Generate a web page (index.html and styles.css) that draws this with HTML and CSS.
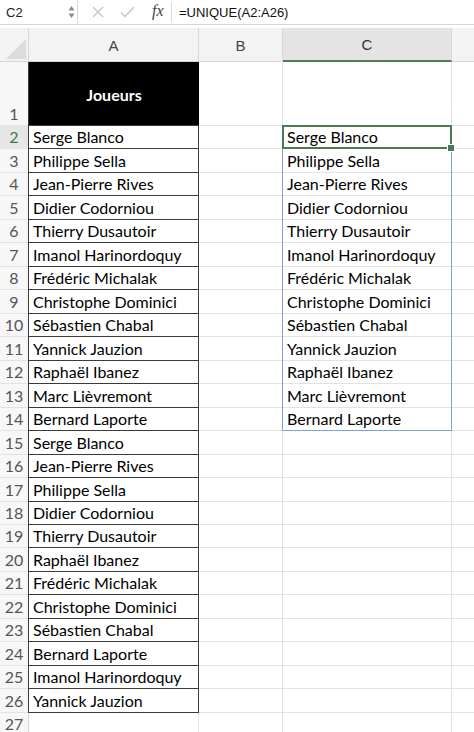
FILE: index.html
```html
<!DOCTYPE html>
<html lang="fr">
<head>
<meta charset="utf-8">
<title>UNIQUE</title>
<link rel="stylesheet" href="styles.css">
</head>
<body>
<div class="fbar">
  <div class="namebox">
    <span class="ref">C2</span>
    <span class="stepper">
      <svg width="7" height="14" viewBox="0 0 7 14"><path d="M3.5 1 L6.5 5.5 H0.5 Z M3.5 13 L6.5 8.5 H0.5 Z" fill="#8a8a8a"/></svg>
    </span>
  </div>
  <div class="tools">
    <svg class="ico" width="12" height="12" viewBox="0 0 12 12"><path d="M1 1 L11 11 M11 1 L1 11" stroke="#c4c4c4" stroke-width="1.3" fill="none"/></svg>
    <svg class="ico" width="15" height="12" viewBox="0 0 15 12"><path d="M1 6.5 L5 10.5 L14 1" stroke="#c4c4c4" stroke-width="1.3" fill="none"/></svg>
    <span class="fx">fx</span>
  </div>
  <div class="input">=UNIQUE(A2:A26)</div>
</div>

<div class="sheet">
  <div class="corner"><span class="tri"></span></div>
  <div class="ch">A</div>
  <div class="ch">B</div>
  <div class="ch act">C</div>
  <div class="ch last"></div>

  <div class="rh">1</div>
  <div class="head">Joueurs</div>
  <div class="c"></div><div class="c"></div><div class="c last"></div>

  <div class="rh act">2</div><div class="c t">Serge Blanco</div><div class="c"></div><div class="c v">Serge Blanco</div><div class="c last"></div>
  <div class="rh">3</div><div class="c t">Philippe Sella</div><div class="c"></div><div class="c v">Philippe Sella</div><div class="c last"></div>
  <div class="rh">4</div><div class="c t">Jean-Pierre Rives</div><div class="c"></div><div class="c v">Jean-Pierre Rives</div><div class="c last"></div>
  <div class="rh">5</div><div class="c t">Didier Codorniou</div><div class="c"></div><div class="c v">Didier Codorniou</div><div class="c last"></div>
  <div class="rh">6</div><div class="c t">Thierry Dusautoir</div><div class="c"></div><div class="c v">Thierry Dusautoir</div><div class="c last"></div>
  <div class="rh">7</div><div class="c t">Imanol Harinordoquy</div><div class="c"></div><div class="c v">Imanol Harinordoquy</div><div class="c last"></div>
  <div class="rh">8</div><div class="c t">Frédéric Michalak</div><div class="c"></div><div class="c v">Frédéric Michalak</div><div class="c last"></div>
  <div class="rh">9</div><div class="c t">Christophe Dominici</div><div class="c"></div><div class="c v">Christophe Dominici</div><div class="c last"></div>
  <div class="rh">10</div><div class="c t">Sébastien Chabal</div><div class="c"></div><div class="c v">Sébastien Chabal</div><div class="c last"></div>
  <div class="rh">11</div><div class="c t">Yannick Jauzion</div><div class="c"></div><div class="c v">Yannick Jauzion</div><div class="c last"></div>
  <div class="rh">12</div><div class="c t">Raphaël Ibanez</div><div class="c"></div><div class="c v">Raphaël Ibanez</div><div class="c last"></div>
  <div class="rh">13</div><div class="c t">Marc Lièvremont</div><div class="c"></div><div class="c v">Marc Lièvremont</div><div class="c last"></div>
  <div class="rh">14</div><div class="c t">Bernard Laporte</div><div class="c"></div><div class="c v">Bernard Laporte</div><div class="c last"></div>
  <div class="rh">15</div><div class="c t">Serge Blanco</div><div class="c"></div><div class="c"></div><div class="c last"></div>
  <div class="rh">16</div><div class="c t">Jean-Pierre Rives</div><div class="c"></div><div class="c"></div><div class="c last"></div>
  <div class="rh">17</div><div class="c t">Philippe Sella</div><div class="c"></div><div class="c"></div><div class="c last"></div>
  <div class="rh">18</div><div class="c t">Didier Codorniou</div><div class="c"></div><div class="c"></div><div class="c last"></div>
  <div class="rh">19</div><div class="c t">Thierry Dusautoir</div><div class="c"></div><div class="c"></div><div class="c last"></div>
  <div class="rh">20</div><div class="c t">Raphaël Ibanez</div><div class="c"></div><div class="c"></div><div class="c last"></div>
  <div class="rh">21</div><div class="c t">Frédéric Michalak</div><div class="c"></div><div class="c"></div><div class="c last"></div>
  <div class="rh">22</div><div class="c t">Christophe Dominici</div><div class="c"></div><div class="c"></div><div class="c last"></div>
  <div class="rh">23</div><div class="c t">Sébastien Chabal</div><div class="c"></div><div class="c"></div><div class="c last"></div>
  <div class="rh">24</div><div class="c t">Bernard Laporte</div><div class="c"></div><div class="c"></div><div class="c last"></div>
  <div class="rh">25</div><div class="c t">Imanol Harinordoquy</div><div class="c"></div><div class="c"></div><div class="c last"></div>
  <div class="rh">26</div><div class="c t">Yannick Jauzion</div><div class="c"></div><div class="c"></div><div class="c last"></div>
  <div class="rh">27</div><div class="c"></div><div class="c"></div><div class="c"></div><div class="c last"></div>

  <div class="spill"></div>
  <div class="active"><span class="handle"></span></div>
</div>
</body>
</html>
```

FILE: styles.css
```css
* { box-sizing: border-box; }
html, body { margin: 0; padding: 0; background: #fff; }
body {
  width: 474px;
  height: 732px;
  overflow: hidden;
  font-family: "Liberation Sans", Arial, sans-serif;
}

.fbar {
  display: flex;
  height: 25px;
  border-bottom: 1px solid #d6d6d6;
  background: #fff;
}
.namebox {
  width: 78px;
  display: flex;
  align-items: center;
  justify-content: space-between;
  padding: 0 2px 0 6px;
  border-right: 1px solid #d9d9d9;
}
.ref { font-size: 13px; color: #222; }
.stepper { display: flex; align-items: center; }
.tools {
  width: 93px;
  display: flex;
  align-items: center;
  padding-left: 14px;
}
.tools .ico { margin-right: 16px; }
.tools .ico + .ico { margin-right: 17px; }
.fx {
  font-family: "Liberation Serif", "Times New Roman", serif;
  font-style: italic;
  font-size: 16px;
  color: #444;
  margin-top: -2px;
}
.input {
  flex: 1;
  display: flex;
  align-items: center;
  padding-left: 7px;
  font-size: 13px;
  color: #111;
  border-left: 1px solid #d9d9d9;
  margin: 2px 0 2px 0;
}

.sheet {
  position: relative;
  margin-top: 3px;
  display: grid;
  grid-template-columns: 29px 170px 84px 169px 1fr;
  grid-template-rows: 34px 64px repeat(26, 23.47px);
  font-family: Lato, "Open Sans", sans-serif;
}

.corner {
  position: relative;
  background: #f3f3f3;
  border-right: 1px solid #d6d6d6;
  border-bottom: 1px solid #d6d6d6;
}
.tri {
  position: absolute;
  right: 2px;
  bottom: 2px;
  width: 0;
  height: 0;
  border-left: 20px solid transparent;
  border-bottom: 20px solid #dcdcdc;
}
.ch {
  background: #f3f3f3;
  border-right: 1px solid #d6d6d6;
  border-bottom: 1px solid #d6d6d6;
  display: flex;
  align-items: center;
  justify-content: center;
  font-family: "Liberation Sans", Arial, sans-serif;
  font-size: 15px;
  color: #444;
  padding-top: 1px;
}
.ch.act {
  background: #e4e4e4;
  border-bottom: 2px solid #4e7f57;
  color: #333;
}
.ch.last { border-right: none; }

.rh {
  background: #f7f7f7;
  border-right: 1px solid #d6d6d6;
  border-bottom: 1px solid #e2e2e2;
  display: flex;
  align-items: flex-end;
  justify-content: center;
  font-size: 16px;
  color: #555;
  padding-bottom: 1px;
  line-height: 20px;
}
.rh.act { background: #e6e6e6; color: #3f7a4a; }

.c {
  border-right: 1px solid #e2e2e2;
  border-bottom: 1px solid #e2e2e2;
  font-size: 16px;
  color: #000;
  white-space: nowrap;
  overflow: hidden;
  display: flex;
  align-items: flex-end;
  padding: 0 0 1px 4px;
  line-height: 20px;
}
.c.last { border-right: none; }
.c.t {
  border-right: 1px solid #3a3a3a;
  border-bottom: 1px solid #3a3a3a;
  box-shadow: -1px 0 0 #3a3a3a;
}
.head {
  background: #000;
  color: #fff;
  font-weight: bold;
  font-size: 16px;
  display: flex;
  align-items: center;
  justify-content: center;
  padding-top: 2px;
  border-bottom: 1px solid #3a3a3a;
  box-shadow: -1px 0 0 #3a3a3a;
}

.spill {
  position: absolute;
  grid-column: 4 / 5;
  grid-row: 3 / 16;
  top: -1px;
  left: -1px;
  right: 0;
  bottom: 0;
  border: 1px solid #7f9fd6;
  pointer-events: none;
}
.active {
  position: absolute;
  grid-column: 4 / 5;
  grid-row: 3 / 4;
  top: -1px;
  left: -1px;
  right: 0;
  bottom: 0;
  border: 2px solid #4a7a52;
  pointer-events: none;
}
.handle {
  position: absolute;
  right: -4px;
  bottom: -4px;
  width: 6px;
  height: 6px;
  background: #4a7a52;
  outline: 1px solid #fff;
}
```
